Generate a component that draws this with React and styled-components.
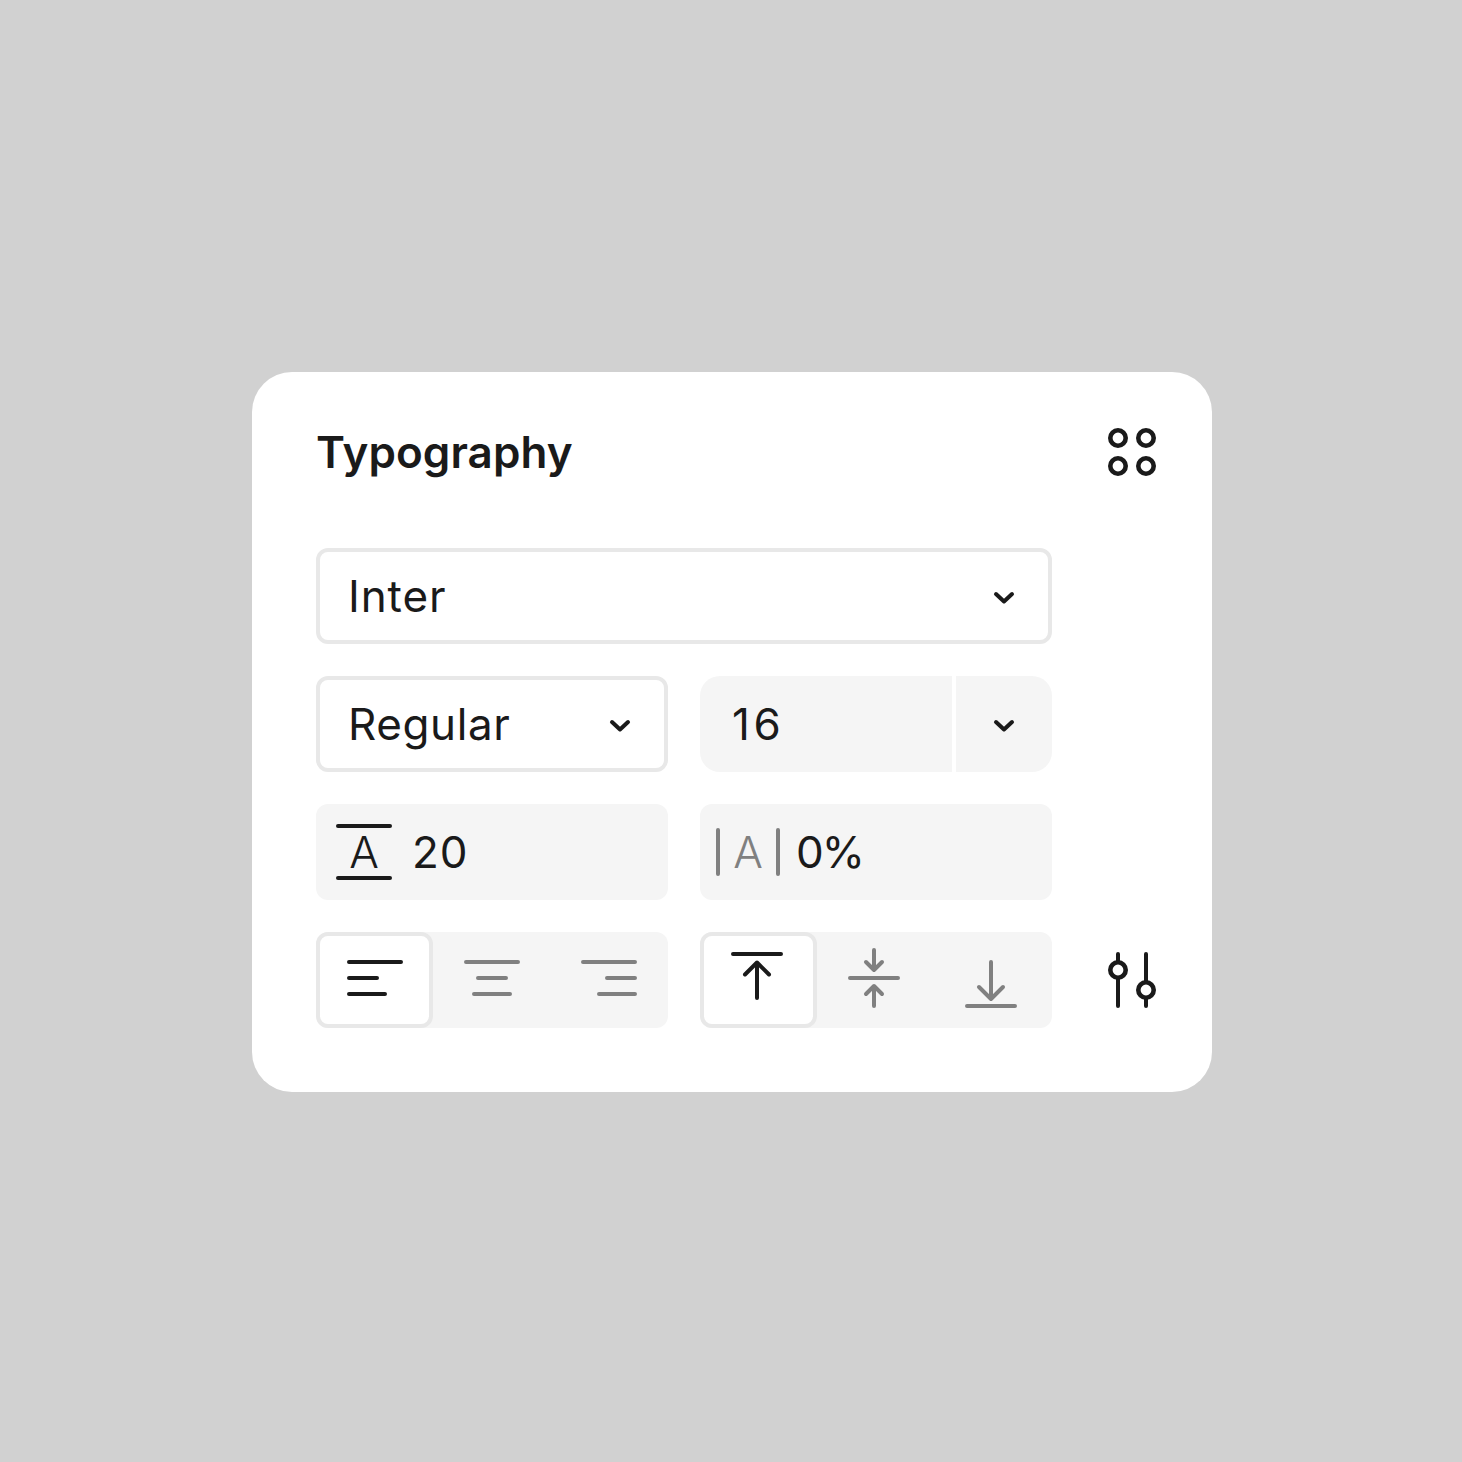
import React from "react";
import styled, { createGlobalStyle } from "styled-components";

const INK = "#1a1a1a";
const MUTED = "#808080";
const FIELD = "#f5f5f5";
const EDGE = "#e8e8e8";

const Global = createGlobalStyle`
  html, body { margin: 0; padding: 0; }
  body {
    background: #d1d1d1;
    font-family: Inter, "Liberation Sans", sans-serif;
    color: ${INK};
  }
`;

const Page = styled.main`
  width: 1462px;
  height: 1462px;
  display: flex;
  align-items: flex-start;
  justify-content: flex-start;
  padding: 372px 0 0 252px;
  box-sizing: border-box;
`;

const Card = styled.section`
  width: 960px;
  height: 720px;
  box-sizing: border-box;
  background: #fff;
  border-radius: 40px;
  padding: 32px 40px 64px 64px;
  display: flex;
  flex-direction: column;
  gap: 48px;
`;

const Header = styled.header`
  height: 96px;
  display: flex;
  align-items: center;
  justify-content: space-between;
`;

const Title = styled.h1`
  margin: 0;
  font-size: 44px;
  line-height: 96px;
  font-weight: 600;
  letter-spacing: 0.1px;
`;

const IconButton = styled.button`
  width: 80px;
  height: 96px;
  padding: 0;
  border: 0;
  background: none;
  display: flex;
  align-items: center;
  justify-content: center;
  color: ${INK};
`;

const Body = styled.div`
  display: flex;
  align-items: flex-end;
  justify-content: space-between;
`;

const Rows = styled.div`
  width: 736px;
  display: grid;
  grid-template-columns: 352px 352px;
  grid-auto-rows: 96px;
  gap: 32px;
`;

const Select = styled.div`
  grid-column: ${(p) => (p.$wide ? "1 / -1" : "auto")};
  box-sizing: border-box;
  border: 4px solid ${EDGE};
  border-radius: 12px;
  padding: 0 32px 0 28px;
  display: flex;
  align-items: center;
  justify-content: space-between;
`;

const Value = styled.span`
  font-size: 44px;
  line-height: 1;
  font-weight: 400;
  letter-spacing: ${(p) => p.$track || 0}px;
`;

const Stepper = styled.div`
  display: grid;
  grid-template-columns: 252px 96px;
  gap: 4px;
`;

const StepValue = styled.div`
  background: ${FIELD};
  border-radius: 20px 0 0 20px;
  padding-left: 32px;
  display: flex;
  align-items: center;
`;

const StepToggle = styled.div`
  background: ${FIELD};
  border-radius: 0 20px 20px 0;
  display: flex;
  align-items: center;
  justify-content: center;
`;

const Field = styled.div`
  background: ${FIELD};
  border-radius: 12px;
  display: flex;
  align-items: center;
  padding-left: ${(p) => p.$inset}px;
  gap: ${(p) => p.$gap}px;
`;

const LeadingGlyph = styled.div`
  width: 56px;
  height: 56px;
  display: flex;
  flex-direction: column;
  align-items: center;
  justify-content: space-between;
`;

const HBar = styled.i`
  width: 56px;
  height: 4px;
  border-radius: 2px;
  background: ${INK};
`;

const GlyphA = styled.span`
  font-size: 44px;
  line-height: 48px;
  font-weight: 300;
  color: ${(p) => p.$color};
`;

const TrackingGlyph = styled.div`
  width: 64px;
  height: 48px;
  display: flex;
  align-items: center;
  justify-content: space-between;
`;

const VBar = styled.i`
  width: 4px;
  height: 48px;
  border-radius: 2px;
  background: ${MUTED};
`;

const Segments = styled.div`
  background: ${FIELD};
  border-radius: 12px;
  display: grid;
  grid-template-columns: repeat(3, 1fr);
`;

const Segment = styled.div`
  box-sizing: border-box;
  display: flex;
  align-items: center;
  justify-content: center;
  color: ${(p) => (p.$active ? INK : MUTED)};
  background: ${(p) => (p.$active ? "#fff" : "transparent")};
  border: 4px solid ${(p) => (p.$active ? EDGE : "transparent")};
  border-radius: 12px;
`;

const Svg = ({ size = 80, children }) => (
  <svg
    width={size}
    height={size}
    viewBox={`0 0 ${size} ${size}`}
    fill="none"
    stroke="currentColor"
    strokeWidth="4"
    strokeLinecap="round"
    strokeLinejoin="round"
    style={{ display: "block", flex: "none" }}
  >
    {children}
  </svg>
);

const Chevron = () => (
  <Svg size={24}>
    <path d="M4 10 12 17.5 20 10" />
  </Svg>
);

const App = () => (
  <Page>
    <Global />
    <Card>
      <Header>
        <Title>Typography</Title>
        <IconButton aria-label="Styles">
          <Svg size={80}>
            <g strokeWidth="4.6">
              <circle cx="26" cy="26" r="7.7" />
              <circle cx="54" cy="26" r="7.7" />
              <circle cx="26" cy="54" r="7.7" />
              <circle cx="54" cy="54" r="7.7" />
            </g>
          </Svg>
        </IconButton>
      </Header>
      <Body>
        <Rows>
          <Select $wide>
            <Value $track={0.9}>Inter</Value>
            <Chevron />
          </Select>
          <Select>
            <Value $track={0.6}>Regular</Value>
            <Chevron />
          </Select>
          <Stepper>
            <StepValue>
              <Value $track={3.5}>16</Value>
            </StepValue>
            <StepToggle>
              <Chevron />
            </StepToggle>
          </Stepper>
          <Field $inset={20} $gap={20}>
            <LeadingGlyph>
              <HBar />
              <GlyphA $color={INK}>A</GlyphA>
              <HBar />
            </LeadingGlyph>
            <Value $track={1}>20</Value>
          </Field>
          <Field $inset={16} $gap={16}>
            <TrackingGlyph>
              <VBar />
              <GlyphA $color={MUTED}>A</GlyphA>
              <VBar />
            </TrackingGlyph>
            <Value $track={-2}>0%</Value>
          </Field>
          <Segments>
            <Segment $active>
              <Svg size={64}>
                <path d="M6 14H58M6 30H34M6 46H42" />
              </Svg>
            </Segment>
            <Segment>
              <Svg size={64}>
                <path d="M6 14H58M18 30H46M14 46H50" />
              </Svg>
            </Segment>
            <Segment>
              <Svg size={64}>
                <path d="M6 14H58M30 30H58M22 46H58" />
              </Svg>
            </Segment>
          </Segments>
          <Segments>
            <Segment $active>
              <Svg size={80}>
                <path d="M14 14H62M38 22.5V58M26 34.5 38 22.5 50 34.5" />
              </Svg>
            </Segment>
            <Segment>
              <Svg size={80}>
                <path d="M14 38H62M38 10V30M30 22 38 30 46 22M38 46V66M30 54 38 46 46 54" />
              </Svg>
            </Segment>
            <Segment>
              <Svg size={80}>
                <path d="M14 66H62M38 22V59M26 47 38 59 50 47" />
              </Svg>
            </Segment>
          </Segments>
        </Rows>
        <IconButton aria-label="Settings">
          <Svg size={80}>
            <path d="M26 14V22M26 38V66M54 14V42M54 58V66" />
            <g strokeWidth="4.6">
              <circle cx="26" cy="30" r="7.7" />
              <circle cx="54" cy="50" r="7.7" />
            </g>
          </Svg>
        </IconButton>
      </Body>
    </Card>
  </Page>
);

export default App;
